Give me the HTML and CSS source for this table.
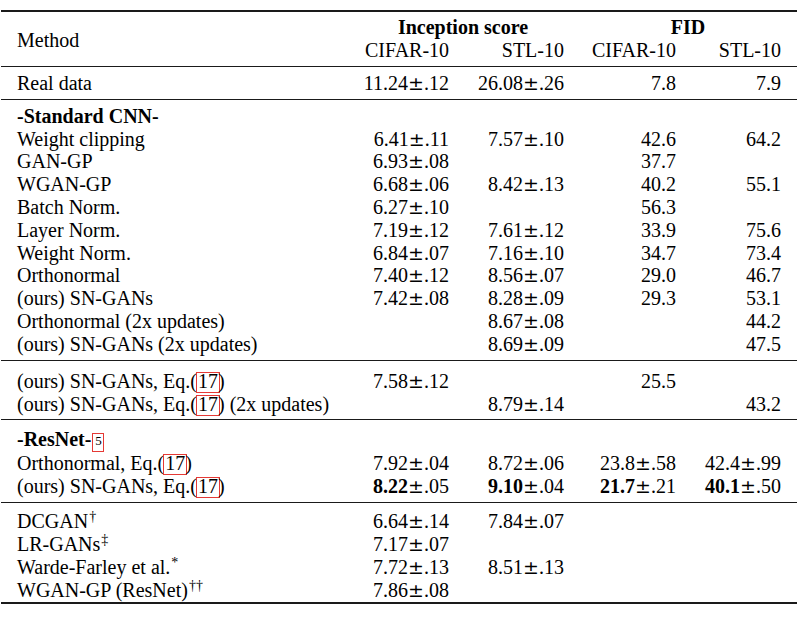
FILE: index.html
```html
<!DOCTYPE html>
<html>
<head>
<meta charset="utf-8">
<link rel="stylesheet" href="styles.css">
</head>
<body>
<div class="page">
<table class="results">
  <colgroup>
    <col class="c-method"><col class="c-n1"><col class="c-n2"><col class="c-n3"><col class="c-n4">
  </colgroup>
  <thead>
    <tr class="first">
      <th class="method" rowspan="2">Method</th>
      <th class="group is-group" colspan="2">Inception score</th>
      <th class="group fid-group last-col" colspan="2">FID</th>
    </tr>
    <tr class="last">
      <th class="num">CIFAR-10</th>
      <th class="num">STL-10</th>
      <th class="num">CIFAR-10</th>
      <th class="num last-col">STL-10</th>
    </tr>
  </thead>
  <tbody class="sec-real">
    <tr class="first last"><td>Real data</td><td>11.24<span class="pm">±</span>.12</td><td>26.08<span class="pm">±</span>.26</td><td>7.8</td><td>7.9</td></tr>
  </tbody>
  <tbody class="sec-cnn">
    <tr class="first"><td class="sechead">-Standard CNN-</td><td></td><td></td><td></td><td></td></tr>
    <tr><td>Weight clipping</td><td>6.41<span class="pm">±</span>.11</td><td>7.57<span class="pm">±</span>.10</td><td>42.6</td><td>64.2</td></tr>
    <tr><td>GAN-GP</td><td>6.93<span class="pm">±</span>.08</td><td></td><td>37.7</td><td></td></tr>
    <tr><td>WGAN-GP</td><td>6.68<span class="pm">±</span>.06</td><td>8.42<span class="pm">±</span>.13</td><td>40.2</td><td>55.1</td></tr>
    <tr><td>Batch Norm.</td><td>6.27<span class="pm">±</span>.10</td><td></td><td>56.3</td><td></td></tr>
    <tr><td>Layer Norm.</td><td>7.19<span class="pm">±</span>.12</td><td>7.61<span class="pm">±</span>.12</td><td>33.9</td><td>75.6</td></tr>
    <tr><td>Weight Norm.</td><td>6.84<span class="pm">±</span>.07</td><td>7.16<span class="pm">±</span>.10</td><td>34.7</td><td>73.4</td></tr>
    <tr><td>Orthonormal</td><td>7.40<span class="pm">±</span>.12</td><td>8.56<span class="pm">±</span>.07</td><td>29.0</td><td>46.7</td></tr>
    <tr><td>(ours) SN-GANs</td><td>7.42<span class="pm">±</span>.08</td><td>8.28<span class="pm">±</span>.09</td><td>29.3</td><td>53.1</td></tr>
    <tr><td>Orthonormal (2x updates)</td><td></td><td>8.67<span class="pm">±</span>.08</td><td></td><td>44.2</td></tr>
    <tr class="last"><td>(ours) SN-GANs (2x updates)</td><td></td><td>8.69<span class="pm">±</span>.09</td><td></td><td>47.5</td></tr>
  </tbody>
  <tbody class="sec-eq">
    <tr class="first"><td>(ours) SN-GANs, Eq.(<span class="ref">17</span>)</td><td>7.58<span class="pm">±</span>.12</td><td></td><td>25.5</td><td></td></tr>
    <tr class="last"><td>(ours) SN-GANs, Eq.(<span class="ref">17</span>) (2x updates)</td><td></td><td>8.79<span class="pm">±</span>.14</td><td></td><td>43.2</td></tr>
  </tbody>
  <tbody class="sec-res">
    <tr class="first"><td class="sechead">-ResNet-<span class="fnref">5</span></td><td></td><td></td><td></td><td></td></tr>
    <tr><td>Orthonormal, Eq.(<span class="ref">17</span>)</td><td>7.92<span class="pm">±</span>.04</td><td>8.72<span class="pm">±</span>.06</td><td>23.8<span class="pm">±</span>.58</td><td>42.4<span class="pm">±</span>.99</td></tr>
    <tr class="last"><td>(ours) SN-GANs, Eq.(<span class="ref">17</span>)</td><td><b>8.22</b><span class="pm">±</span>.05</td><td><b>9.10</b><span class="pm">±</span>.04</td><td><b>21.7</b><span class="pm">±</span>.21</td><td><b>40.1</b><span class="pm">±</span>.50</td></tr>
  </tbody>
  <tbody class="sec-other">
    <tr class="first"><td>DCGAN<sup class="sym">†</sup></td><td>6.64<span class="pm">±</span>.14</td><td>7.84<span class="pm">±</span>.07</td><td></td><td></td></tr>
    <tr><td>LR-GANs<sup class="sym">‡</sup></td><td>7.17<span class="pm">±</span>.07</td><td></td><td></td><td></td></tr>
    <tr><td>Warde-Farley et al.<sup class="sym">*</sup></td><td>7.72<span class="pm">±</span>.13</td><td>8.51<span class="pm">±</span>.13</td><td></td><td></td></tr>
    <tr class="last"><td>WGAN-GP (ResNet)<sup class="sym">††</sup></td><td>7.86<span class="pm">±</span>.08</td><td></td><td></td><td></td></tr>
  </tbody>
</table>
</div>
</body>
</html>
```

FILE: styles.css
```css
html, body {
  margin: 0;
  padding: 0;
  background: #ffffff;
}

.page {
  padding: 10px 3px 0 1px;
}

.results {
  border-collapse: collapse;
  width: 796px;
  table-layout: fixed;
  font-family: "Liberation Serif", "Times New Roman", serif;
  font-size: 20px;
  line-height: 22.8px;
  color: #000;
  border-top: 2px solid #1a1a1a;
  border-bottom: 2px solid #1a1a1a;
}

.c-method { width: 348px; }
.c-n1 { width: 100px; }
.c-n2 { width: 115px; }
.c-n3 { width: 112px; }
.c-n4 { width: 121px; }

.results th,
.results td {
  padding: 0;
  text-align: right;
  white-space: nowrap;
  font-weight: normal;
  vertical-align: middle;
}

.results th:first-child,
.results td:first-child {
  text-align: left;
  padding-left: 16px;
}

.results td:last-child,
.results th.last-col {
  padding-right: 16px;
}

.results th.group {
  font-weight: bold;
  text-align: center;
}

.results th.is-group { padding-left: 13px; }
.results th.fid-group { padding-left: 31px; }

.results thead tr.first th { padding-top: 4px; }
.results thead tr.last th { padding-bottom: 4px; }
.results thead th.method { padding-top: 0; padding-bottom: 0; }

.results tbody {
  border-top: 1px solid #1a1a1a;
}

.results thead + tbody {
  border-top: 1.5px solid #1a1a1a;
}

.sec-real tr.first td { padding-top: 5px; padding-bottom: 5px; }
.sec-cnn tr.first td { padding-top: 4.5px; }
.sec-cnn tr.last td { padding-bottom: 4.5px; }
.sec-eq tr.first td { padding-top: 8.5px; }
.sec-eq tr.last td { padding-bottom: 3px; }
.sec-res tr.first td { padding-top: 8px; }
.sec-res tr.last td { padding-bottom: 4.6px; }
.sec-other td { line-height: 23px; }
.sec-other tr.first td { padding-top: 7px; }
.sec-other tr.last td { padding-bottom: 0; }

.results td.sechead {
  font-weight: bold;
}

.pm {
  font-family: "DejaVu Serif", "Liberation Serif", serif;
  font-size: 19px;
  font-weight: normal;
}

b { font-weight: bold; }

.ref {
  display: inline-block;
  line-height: 16px;
  padding: 0 1px 3px 1px;
  margin: 0 -2px 0 -1px;
  border: 1px solid #e53935;
}

.fnref {
  display: inline-block;
  overflow: hidden;
  height: 17px;
  width: 8px;
  padding: 0 1px;
  margin-left: 1px;
  font-size: 13px;
  line-height: 13px;
  font-weight: normal;
  text-align: center;
  vertical-align: -6px;
  border: 1px solid #e53935;
}

.sym {
  font-size: 14px;
  line-height: 0;
  vertical-align: 7px;
  margin-left: 1px;
}
```
